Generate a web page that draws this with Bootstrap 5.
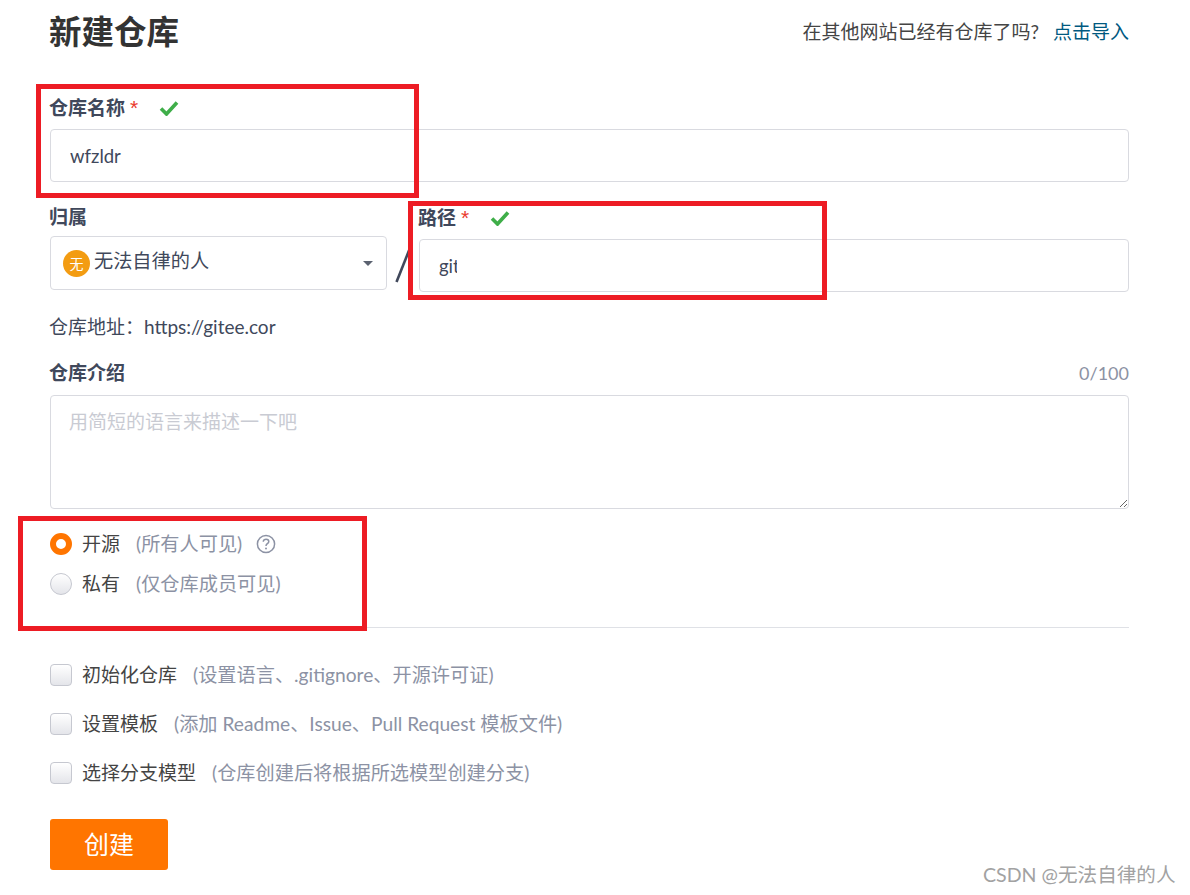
<!DOCTYPE html>
<html lang="zh-CN">
<head>
<meta charset="utf-8">
<title>新建仓库</title>
<link href="https://cdn.jsdelivr.net/npm/bootstrap@5.3.0/dist/css/bootstrap.min.css" rel="stylesheet">
<style>
html,body{height:100%;}
body{font-family:Lato,"Noto Sans CJK SC",sans-serif;background:#fff;color:#40485b;font-size:19px;overflow:hidden;}
.sheet{position:relative;height:895px;padding:0 61px 0 50px;}
.head-row{height:64px;}
.page-title{font-size:32.5px;font-weight:700;color:#333;margin:0 0 0 -1px;line-height:64px;}
.import-note{font-size:19px;color:#444;}
.import-note a{color:#005980;text-decoration:none;margin-left:14px;}
.field-label{font-size:19px;font-weight:700;color:#40485b;line-height:26px;height:26px;margin-left:-1px;}
.label-first{margin-top:31px;}
.req{color:#ea3a2e;margin-left:5px;font-family:"Liberation Sans",sans-serif;font-size:21px;font-weight:400;}
.tick{margin-left:16px;vertical-align:-1px;}
.gitee-input.form-control{height:53px;border:1px solid #d9dae0;border-radius:4px;padding:0 19px;font-size:18.5px;color:#40485b;box-shadow:none;}
.path-input.form-control{padding-right:671px;}
.gap-name{margin-top:20px;}
.owner-col{width:337px;padding-top:2px;}
.path-col{width:710px;margin-top:3px;}
.owner-box{height:54px;border:1px solid #d9dae0;border-radius:4px;padding:0 12px;margin-top:6px;font-size:19.2px;color:#40485b;}
.owner-name{margin-bottom:4px;}
.avatar-dot{width:27px;height:27px;border-radius:50%;background:#f39c12;color:#fff;font-size:14px;margin-right:4px;flex:none;}
.caret-mark{width:0;height:0;border-left:5.5px solid transparent;border-right:5.5px solid transparent;border-top:5.5px solid #5b6270;margin-left:auto;margin-right:1px;}
.slash-mark{width:32px;padding-top:45px;}
.addr-line{margin-top:22px;line-height:26px;font-size:19px;color:#40485b;margin-left:-1px;}
.intro-row{margin-top:20px;}
.count-text{color:#8c92a4;font-size:18px;line-height:26px;}
.gitee-area.form-control{height:114px;margin-top:9px;border:1px solid #d9dae0;border-radius:4px;padding:12px 18px;font-size:19px;box-shadow:none;}
.gitee-area.form-control::placeholder{color:#c9cbd3;}
.opt-row{display:flex;align-items:center;line-height:26px;color:#40485b;font-size:19px;}
.opt-row .form-check-input{margin:0 10px 0 0;flex:none;border:1px solid #c6c8d0;background-color:#f3f4f7;background-image:linear-gradient(#fff,#e4e5ea);}
.radio-size{width:22px;height:22px;}
.check-size{width:22px;height:22px;border-radius:4px!important;}
.opt-row .form-check-input.orange-radio:checked{background:#fff;border:6px solid #ff7500;}
.radio-top{margin-top:22px;}
.radio-next{margin-top:14px;}
.hint-text{color:#8c92a4;margin-left:16px;font-size:19.2px;}
.main-line{color:#444;}
.help-mark{margin-left:14px;}
.rule-line{border:0;border-top:1px solid #dfe1e6;opacity:1;margin:30px 0 34px;}
.check-row + .check-row{margin-top:23px;}
.go-btn.btn{width:118px;height:51px;margin-top:33px;background:#ff7500;border:0;border-radius:3px;color:#fff;font-size:25px;padding:0;}
.red-frame{position:absolute;border:5px solid #ed1c24;pointer-events:none;}
.frame-a{left:36px;top:84px;width:383px;height:114px;}
.frame-b{left:408px;top:201px;width:419px;height:99px;}
.frame-c{left:18px;top:516px;width:349px;height:115px;}
.mark-text{position:absolute;left:983px;top:862px;font-size:19.6px;line-height:26px;color:#a2a2a2;white-space:nowrap;}
</style>
</head>
<body>
<div class="sheet">
  <div class="head-row d-flex justify-content-between align-items-center">
    <h1 class="page-title">新建仓库</h1>
    <div class="import-note">在其他网站已经有仓库了吗?<a href="#">点击导入</a></div>
  </div>

  <div class="field-label label-first">仓库名称<span class="req">*</span>
    <svg class="tick" width="20" height="16" viewBox="0 0 20 16"><path d="M2 8.5 7.5 14 18 2.5" fill="none" stroke="#3fae49" stroke-width="3.6"/></svg>
  </div>
  <input class="form-control gitee-input mt-2" type="text" value="wfzldr">

  <div class="d-flex gap-name">
    <div class="owner-col">
      <div class="field-label">归属</div>
      <div class="owner-box d-flex align-items-center">
        <span class="avatar-dot d-flex align-items-center justify-content-center">无</span>
        <span class="owner-name">无法自律的人</span>
        <span class="caret-mark"></span>
      </div>
    </div>
    <div class="slash-mark">
      <svg class="ms-2" width="16" height="36" viewBox="0 0 16 36"><path d="M15 1 1.5 35" stroke="#40485b" stroke-width="2.6" fill="none"/></svg>
    </div>
    <div class="path-col">
      <div class="field-label">路径<span class="req">*</span>
        <svg class="tick" width="20" height="16" viewBox="0 0 20 16"><path d="M2 8.5 7.5 14 18 2.5" fill="none" stroke="#3fae49" stroke-width="3.6"/></svg>
      </div>
      <input class="form-control gitee-input path-input mt-2" type="text" value="git">
    </div>
  </div>

  <div class="addr-line">仓库地址：https://gitee.cor</div>

  <div class="intro-row d-flex justify-content-between">
    <div class="field-label">仓库介绍</div>
    <div class="count-text">0/100</div>
  </div>
  <textarea class="form-control gitee-area" placeholder="用简短的语言来描述一下吧"></textarea>

  <div class="opt-row radio-top">
    <input class="form-check-input radio-size orange-radio" type="radio" name="vis" checked>
    <span class="main-line">开源</span><span class="hint-text">(所有人可见)</span>
    <svg class="help-mark" width="20" height="20" viewBox="0 0 20 20"><circle cx="10" cy="10" r="8.6" fill="none" stroke="#8c92a4" stroke-width="1.5"/><path d="M7.3 7.8c0-1.6 1.2-2.6 2.8-2.6s2.7 1 2.7 2.3c0 2.2-2.8 2.2-2.8 4.4" fill="none" stroke="#8c92a4" stroke-width="1.5"/><circle cx="10" cy="14.6" r="1" fill="#8c92a4"/></svg>
  </div>
  <div class="opt-row radio-next">
    <input class="form-check-input radio-size" type="radio" name="vis">
    <span class="main-line">私有</span><span class="hint-text">(仅仓库成员可见)</span>
  </div>

  <hr class="rule-line">

  <div class="opt-row check-row">
    <input class="form-check-input check-size" type="checkbox">
    <span class="main-line">初始化仓库</span><span class="hint-text">(设置语言、.gitignore、开源许可证)</span>
  </div>
  <div class="opt-row check-row">
    <input class="form-check-input check-size" type="checkbox">
    <span class="main-line">设置模板</span><span class="hint-text">(添加 Readme、Issue、Pull Request 模板文件)</span>
  </div>
  <div class="opt-row check-row">
    <input class="form-check-input check-size" type="checkbox">
    <span class="main-line">选择分支模型</span><span class="hint-text">(仓库创建后将根据所选模型创建分支)</span>
  </div>

  <button class="btn go-btn" type="button">创建</button>

  <div class="red-frame frame-a"></div>
  <div class="red-frame frame-b"></div>
  <div class="red-frame frame-c"></div>
  <div class="mark-text">CSDN @无法自律的人</div>
</div>
<script src="https://cdn.jsdelivr.net/npm/bootstrap@5.3.0/dist/js/bootstrap.bundle.min.js"></script>
</body>
</html>
